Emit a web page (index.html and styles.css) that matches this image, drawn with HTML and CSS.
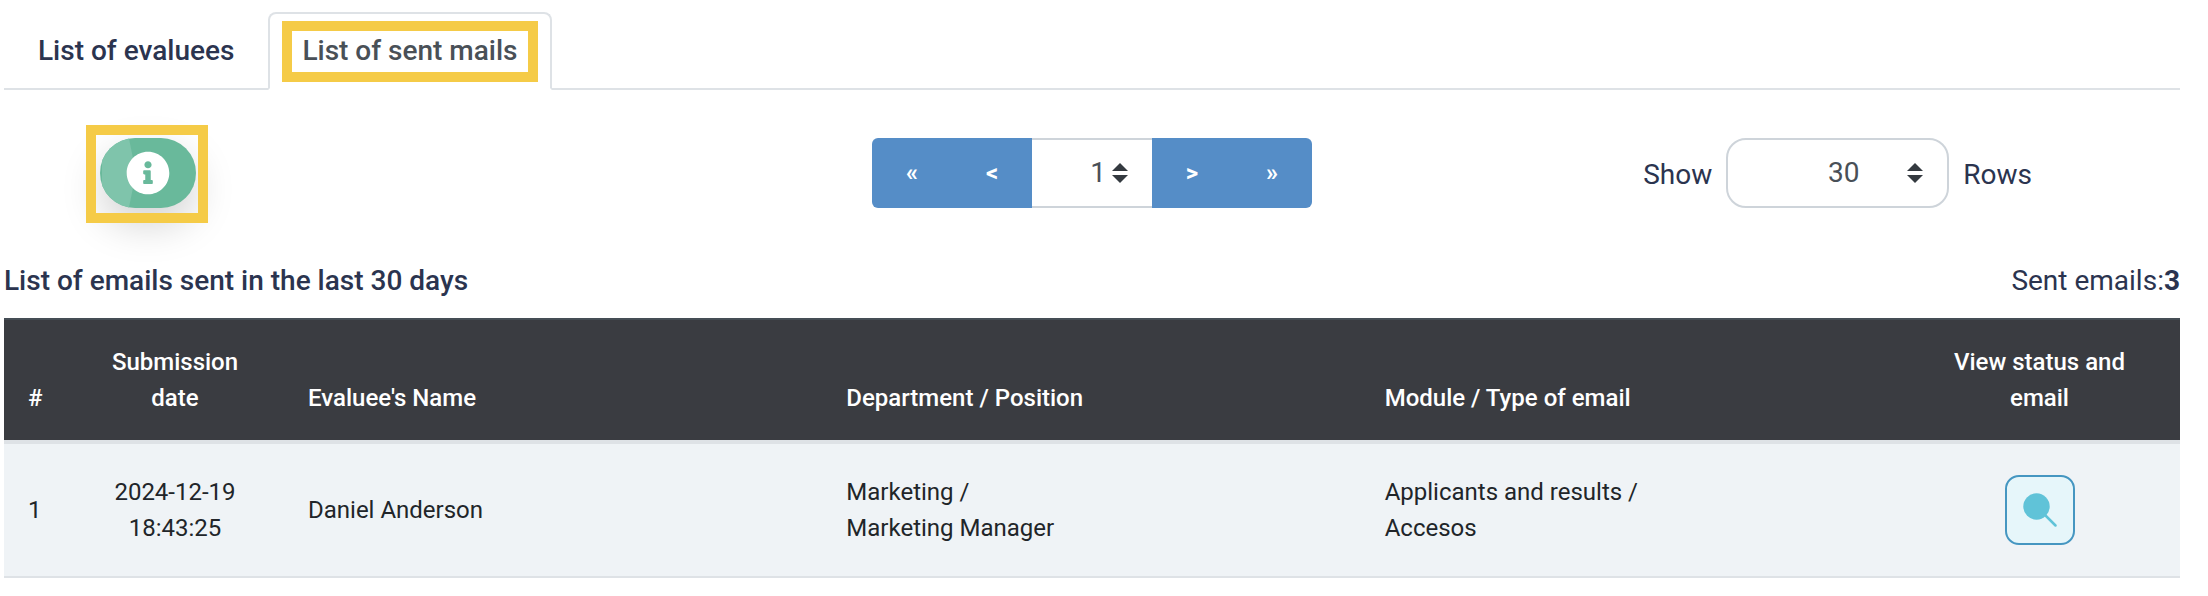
FILE: index.html
```html
<!DOCTYPE html>
<html lang="en">
<head>
<meta charset="utf-8">
<title>List of sent mails</title>
<link rel="stylesheet" href="styles.css">
</head>
<body>
<nav class="tabs">
  <a class="tab" href="#evaluees">List of evaluees</a>
  <a class="tab tab-active" href="#mails" aria-current="page"><span class="tab-label">List of sent mails</span></a>
</nav>

<main>
  <div class="toolbar">
    <div class="toolbar-start">
      <div class="info-wrap">
        <button class="info-button" type="button" aria-label="Information">
          <svg class="info-icon" viewBox="0 0 512 512" aria-hidden="true"><path fill="#fff" d="M256 8C119.043 8 8 119.083 8 256c0 136.997 111.043 248 248 248s248-111.003 248-248C504 119.083 392.957 8 256 8zm0 110c23.196 0 42 18.804 42 42s-18.804 42-42 42-42-18.804-42-42 18.804-42 42-42zm56 254c0 6.627-5.373 12-12 12h-88c-6.627 0-12-5.373-12-12v-24c0-6.627 5.373-12 12-12h12v-64h-12c-6.627 0-12-5.373-12-12v-24c0-6.627 5.373-12 12-12h64c6.627 0 12 5.373 12 12v100h12c6.627 0 12 5.373 12 12v24z"/></svg>
        </button>
      </div>
    </div>

    <div class="pager">
      <button class="pager-button" type="button" aria-label="First page">«</button>
      <button class="pager-button" type="button" aria-label="Previous page">&lt;</button>
      <div class="select-box">
        <select class="select select-page" aria-label="Page"><option>1</option></select>
        <svg class="caret caret-page" viewBox="0 0 16 20" aria-hidden="true"><path fill="#343a40" d="M8 0l8 8H0zM0 12h16l-8 8z"/></svg>
      </div>
      <button class="pager-button" type="button" aria-label="Next page">&gt;</button>
      <button class="pager-button" type="button" aria-label="Last page">»</button>
    </div>

    <div class="toolbar-end">
      <label class="rows-label" for="rows">Show</label>
      <div class="select-box">
        <select class="select select-rows" id="rows"><option>30</option></select>
        <svg class="caret caret-rows" viewBox="0 0 16 20" aria-hidden="true"><path fill="#343a40" d="M8 0l8 8H0zM0 12h16l-8 8z"/></svg>
      </div>
      <span class="rows-label">Rows</span>
    </div>
  </div>

  <div class="summary">
    <h1 class="title">List of emails sent in the last 30 days</h1>
    <div>Sent emails:<strong class="count">3</strong></div>
  </div>

  <table class="mails">
    <colgroup><col class="col-number"><col class="col-date"><col><col><col><col class="col-view"></colgroup>
    <thead>
      <tr>
        <th>#</th>
        <th class="center">Submission<br>date</th>
        <th>Evaluee's Name</th>
        <th>Department / Position</th>
        <th>Module / Type of email</th>
        <th class="center">View status and<br>email</th>
      </tr>
    </thead>
    <tbody>
      <tr>
        <td>1</td>
        <td class="center">2024-12-19<br>18:43:25</td>
        <td>Daniel Anderson</td>
        <td>Marketing /<br>Marketing Manager</td>
        <td>Applicants and results /<br>Accesos</td>
        <td class="center">
          <button class="view-button" type="button" aria-label="View status and email">
            <svg class="view-icon" viewBox="0 0 34 34" aria-hidden="true"><circle cx="13.5" cy="13.5" r="13.2" fill="#60c3d8"/><path d="M22 22l10.500 10.500" stroke="#60c3d8" stroke-width="2.500" stroke-linecap="round"/></svg>
          </button>
        </td>
      </tr>
    </tbody>
  </table>
</main>
</body>
</html>
```
FILE: styles.css
```css
* {
  box-sizing: border-box;
}

body {
  margin: 0;
  padding: 12px 28px 18px 4px;
  background: #fff;
  color: #2b344f;
  font-family: Roboto, "Liberation Sans", sans-serif;
  font-size: 28px;
  line-height: 42px;
}

button,
select {
  font: inherit;
}

.tabs {
  display: flex;
  border-bottom: 2px solid #dee2e6;
}

.tab {
  margin-bottom: -2px;
  padding: 16px 32px;
  border: 2px solid transparent;
  border-radius: 8px 8px 0 0;
  color: inherit;
  font-weight: 500;
  text-decoration: none;
}

.tab-active {
  border-color: #dee2e6 #dee2e6 #fff;
  background: #fff;
  color: #495057;
}

.tab-label {
  position: relative;
}

.tab-label::after,
.info-wrap::after {
  content: "";
  position: absolute;
  border: 10px solid #f5cb47;
  pointer-events: none;
}

.tab-label::after {
  inset: -13px -20px -15px;
}

.toolbar {
  display: grid;
  grid-template-columns: 1fr auto 1fr;
  align-items: center;
  padding-top: 48px;
}

.toolbar-start {
  padding-left: 96px;
}

.info-wrap {
  position: relative;
  width: 96px;
  height: 70px;
}

.info-wrap::after {
  inset: -13px -12px -15px -14px;
}

.info-button {
  position: relative;
  display: flex;
  align-items: center;
  justify-content: center;
  width: 100%;
  height: 100%;
  padding: 0;
  overflow: hidden;
  border: 0;
  border-radius: 35px;
  background: #69b99b;
  box-shadow: 0 16px 40px rgba(0, 0, 0, 0.18);
}

.info-button::before {
  content: "";
  position: absolute;
  inset: 0 62px 0 2px;
  background: #7fc4ab;
  clip-path: polygon(0 0, 84% 0, 100% 36%, 100% 64%, 84% 100%, 0 100%);
}

.info-icon {
  position: relative;
  width: 44px;
  height: 44px;
}

.pager {
  display: flex;
  overflow: hidden;
  border-radius: 6px;
}

.pager-button {
  width: 80px;
  height: 70px;
  padding: 0;
  border: 0;
  background: #558dc7;
  color: #fff;
  font-size: 24px;
  font-weight: 700;
}

.select-box {
  position: relative;
}

.select {
  display: block;
  height: 70px;
  border: 2px solid #ced4da;
  background: #fff;
  color: #495057;
  appearance: none;
}

.select-page {
  width: 120px;
  padding: 0 46px 0 0;
  border-width: 2px 0;
  border-radius: 0;
  text-align: right;
  text-align-last: right;
}

.select-rows {
  width: 223px;
  padding: 0 12px 0 24px;
  border-radius: 20px;
  text-align: center;
  text-align-last: center;
}

.caret {
  position: absolute;
  top: 25px;
  width: 16px;
  height: 20px;
  pointer-events: none;
}

.caret-page {
  right: 24px;
}

.caret-rows {
  right: 26px;
}

.toolbar-end {
  display: flex;
  align-items: center;
  justify-content: flex-end;
  gap: 14px;
  padding-right: 148px;
}

.rows-label {
  padding-top: 4px;
}

.summary {
  display: flex;
  justify-content: space-between;
  margin: 52px 0 16px;
}

.title {
  margin: 0;
  font-size: 28px;
  font-weight: 500;
}

.count {
  font-weight: 700;
}

.mails {
  width: 100%;
  border-spacing: 0;
  table-layout: fixed;
  color: #212529;
  font-size: 24px;
  line-height: 36px;
}

.col-number {
  width: 62px;
}

.col-date {
  width: 218px;
}

.col-view {
  width: 281px;
}

.mails th {
  padding: 24px;
  border-top: 2px solid #454d55;
  border-bottom: 4px solid #dee2e6;
  background: #3a3c41;
  color: #fff;
  font-weight: 500;
  text-align: left;
  vertical-align: bottom;
}

.mails td {
  padding: 30px 24px;
  border-bottom: 2px solid #dee2e6;
  background: #eff3f6;
}

.mails .center {
  text-align: center;
}

.view-button {
  display: block;
  width: 70px;
  height: 70px;
  margin: 0 auto;
  padding: 0;
  border: 2px solid #4596c1;
  border-radius: 14px;
  background: #e6f6fa;
}

.view-icon {
  display: block;
  width: 34px;
  height: 34px;
  margin: 0 auto;
}
```
